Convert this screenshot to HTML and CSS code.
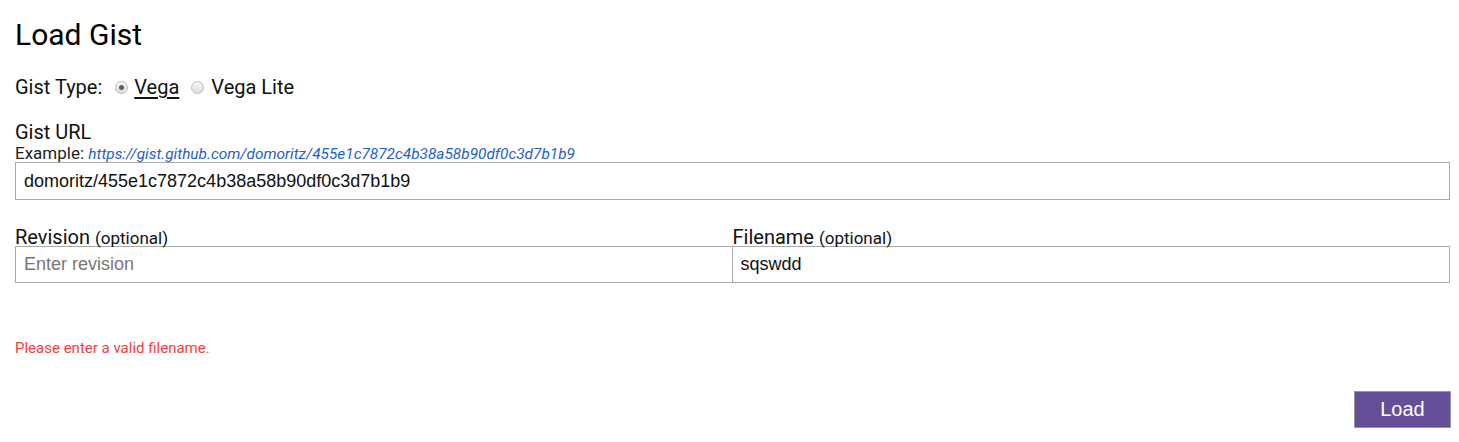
FILE: index.html
```html
<!DOCTYPE html>
<html>
<head>
<meta charset="utf-8">
<link rel="stylesheet" href="styles.css">
</head>
<body>
<div class="page">
  <h1 class="title">Load Gist</h1>
  <div class="type-row">
    <span class="type-label">Gist Type:</span>
    <label class="radio"><input type="radio" name="t" checked><span class="radio-text underline">Vega</span></label>
    <label class="radio"><input type="radio" name="t"><span class="radio-text">Vega Lite</span></label>
  </div>
  <div class="field-label">Gist URL</div>
  <div class="example">Example: <a class="example-link" href="#">https://gist.github.com/domoritz/455e1c7872c4b38a58b90df0c3d7b1b9</a></div>
  <input class="text-input url-input" type="text" value="domoritz/455e1c7872c4b38a58b90df0c3d7b1b9">
  <div class="two-col">
    <div class="col">
      <div class="field-label small-gap">Revision <span class="optional">(optional)</span></div>
      <input class="text-input half-input" type="text" placeholder="Enter revision">
    </div>
    <div class="col">
      <div class="field-label small-gap">Filename <span class="optional">(optional)</span></div>
      <input class="text-input half-input" type="text" value="sqswdd">
    </div>
  </div>
  <div class="error">Please enter a valid filename.</div>
  <div class="actions">
    <button class="load-btn" type="button">Load</button>
  </div>
</div>
</body>
</html>
```
FILE: styles.css
```css
html, body {
  margin: 0;
  padding: 0;
  background: #fff;
}
.page {
  padding: 17px 9px 0 15px;
  font-family: Roboto, "Liberation Sans", sans-serif;
  color: #000;
}
.title {
  margin: 0;
  font-size: 30px;
  line-height: 36px;
  font-weight: 400;
}
.type-row {
  margin-top: 22px;
  display: flex;
  align-items: center;
  height: 24px;
  font-size: 20px;
  color: #111;
}
.type-label {
  margin-right: 13px;
}
.radio {
  display: flex;
  align-items: center;
  margin-right: 12px;
}
.radio input {
  -webkit-appearance: none;
  appearance: none;
  width: 13px;
  height: 13px;
  margin: 0 6px 0 0;
  border-radius: 50%;
  border: 1px solid #b8b8b8;
  background: linear-gradient(#f6f6f6, #dedede);
  box-sizing: border-box;
  position: relative;
}
.radio input:checked::after {
  content: "";
  position: absolute;
  left: 3px;
  top: 3px;
  width: 5px;
  height: 5px;
  border-radius: 50%;
  background: #5c5c5c;
}
.radio + .radio input {
  margin-right: 7px;
}
.underline {
  text-decoration: underline;
  text-underline-offset: 3px;
}
.field-label {
  margin-top: 21px;
  font-size: 20px;
  line-height: 24px;
  color: #111;
}
.field-label.small-gap {
  margin-top: 0;
  padding-top: 3px;
  line-height: 18px;
  height: 18px;
}
.optional {
  font-size: 17px;
}
.example {
  font-size: 17px;
  line-height: 18px;
  height: 18px;
  color: #222;
}
.example-link {
  font-size: 15.4px;
  font-style: italic;
  color: #1f5fc6;
  text-decoration: none;
}
.text-input {
  display: block;
  box-sizing: border-box;
  width: 100%;
  margin: 0;
  border: 1px solid #a9a9a9;
  padding: 0 8px;
  font-family: "Liberation Sans", Arial, sans-serif;
  font-size: 18px;
  color: #111;
  background: #fff;
  outline: none;
}
.text-input::placeholder {
  color: #777;
}
.url-input {
  height: 38px;
}
.two-col {
  margin-top: 25px;
  display: grid;
  grid-template-columns: 1fr 1fr;
}
.half-input {
  height: 37px;
}
.col + .col .half-input {
  margin-left: -1px;
  width: calc(100% + 1px);
}
.error {
  margin-top: 56px;
  font-size: 15px;
  line-height: 18px;
  color: #f2433a;
}
.actions {
  margin-top: 34px;
  display: flex;
  justify-content: flex-end;
}
.load-btn {
  width: 97px;
  height: 37px;
  margin-right: -1px;
  background: #654f98;
  border: 1px solid #9a9a9a;
  color: #fff;
  font-family: "Liberation Sans", Arial, sans-serif;
  font-size: 20px;
  padding: 0;
}
```
